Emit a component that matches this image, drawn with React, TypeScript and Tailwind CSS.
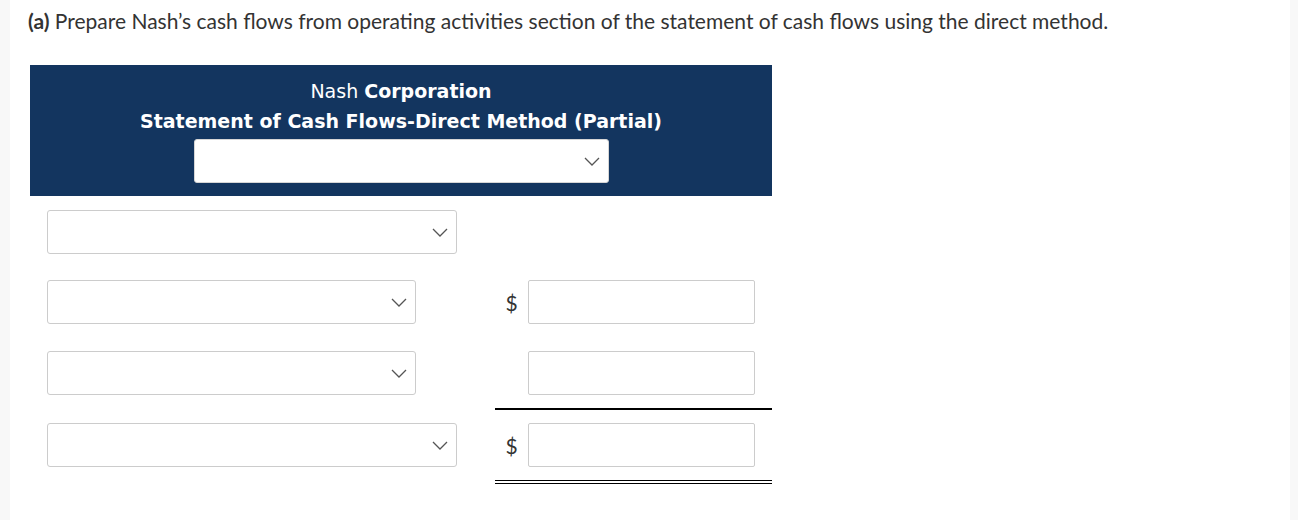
import React from "react";

const font = { fontFamily: "Lato, 'Open Sans', sans-serif" };
const headFont = { fontFamily: "'DejaVu Sans', Verdana, sans-serif" };

function Chevron() {
  return (
    <svg width="16" height="9" viewBox="0 0 16 9" className="shrink-0">
      <polyline points="1,1 8,8 15,1" fill="none" stroke="#555" strokeWidth="1.3" />
    </svg>
  );
}

function Select({ w, light }: { w: string; light?: boolean }) {
  return (
    <div
      className={`${w} h-[44px] bg-white rounded-[3px] border flex items-center justify-end pr-[8px] ${
        light ? "border-[#d6d6d6]" : "border-[#cccccc]"
      }`}
    >
      <Chevron />
    </div>
  );
}

function Input() {
  return <div className="w-[227px] h-[44px] bg-white rounded-[2px] border border-[#cccccc]" />;
}

function Dollar({ show }: { show: boolean }) {
  return (
    <span className="w-[33px] text-center text-[21px] text-[#333] leading-none">{show ? "$" : ""}</span>
  );
}

export default function App() {
  return (
    <div className="flex w-[1298px] h-[520px] bg-white" style={font}>
      <div className="w-[10px] bg-[#f8f8f8]" />
      <div className="flex-1 bg-white pl-[20px] pt-[8px]">
        <p className="-ml-[2px] text-[21px] leading-[26px] text-[#333]">
          <span className="font-bold">(a)</span> Prepare Nash’s cash flows from operating activities section of the
          statement of cash flows using the direct method.
        </p>
        <div className="w-[742px] mt-[31px]">
          <div
            className="bg-[#13355f] pt-[11px] pb-[13px] flex flex-col items-center text-white text-[19px]"
            style={headFont}
          >
            <div className="leading-[30px]">
              Nash <span className="font-bold">Corporation</span>
            </div>
            <div className="leading-[30px] font-bold">Statement of Cash Flows-Direct Method (Partial)</div>
            <div className="mt-[3px]">
              <Select w="w-[415px]" light />
            </div>
          </div>

          <div className="pl-[17px] pt-[14px]">
            <div className="flex items-center">
              <Select w="w-[410px]" />
            </div>
            <div className="flex items-center mt-[26px]">
              <div className="w-[448px]">
                <Select w="w-[369px]" />
              </div>
              <div className="flex items-center">
                <Dollar show />
                <Input />
              </div>
            </div>
            <div className="flex items-center mt-[27px]">
              <div className="w-[448px]">
                <Select w="w-[369px]" />
              </div>
              <div className="flex items-center">
                <Dollar show={false} />
                <Input />
              </div>
            </div>
          </div>
          <div className="ml-[465px] w-[277px] h-[2px] bg-black mt-[13px]" />
          <div className="pl-[17px] mt-[13px]">
            <div className="flex items-center">
              <div className="w-[448px]">
                <Select w="w-[410px]" />
              </div>
              <div className="flex items-center">
                <Dollar show />
                <Input />
              </div>
            </div>
          </div>
          <div className="ml-[465px] w-[277px] mt-[13px]">
            <div className="h-[1px] bg-black" />
            <div className="h-[2px]" />
            <div className="h-[1px] bg-black" />
          </div>
        </div>
      </div>
      <div className="w-[8px] bg-[#f8f8f8]" />
    </div>
  );
}
